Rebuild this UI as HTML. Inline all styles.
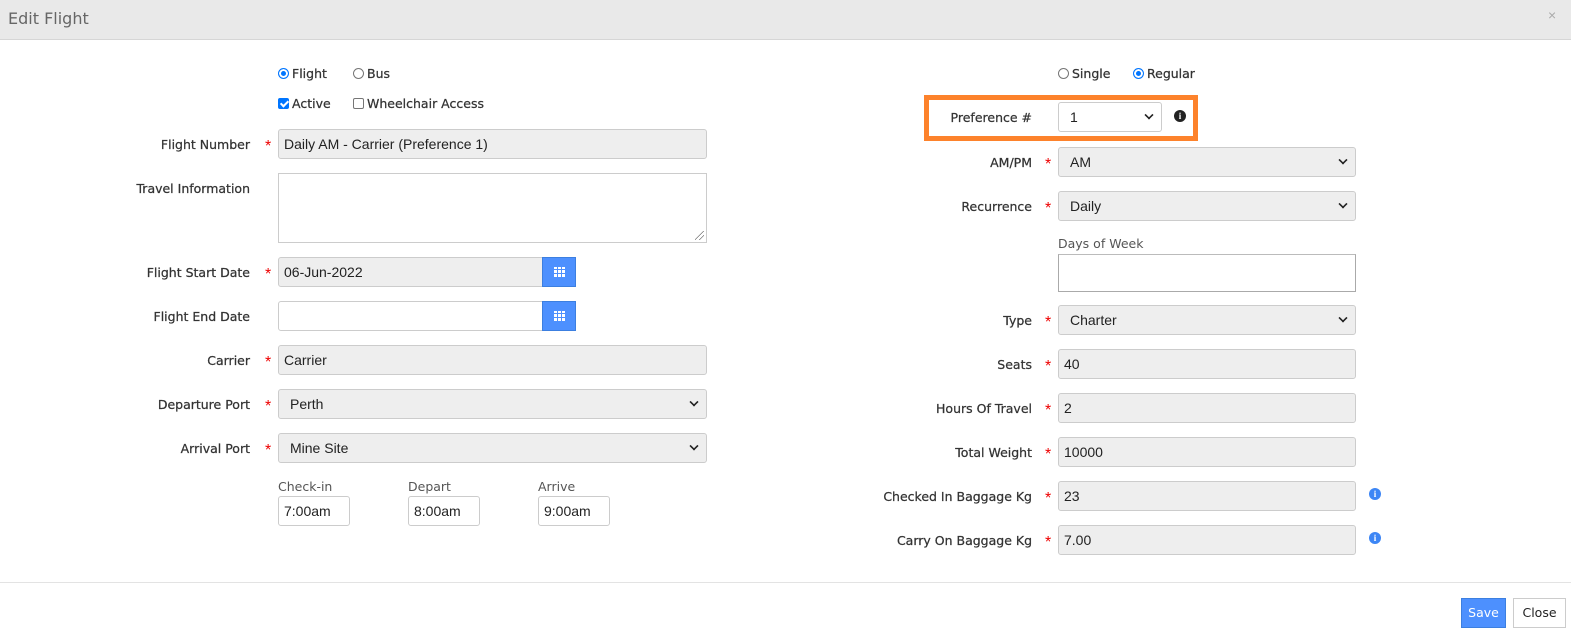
<!DOCTYPE html>
<html><head><meta charset="utf-8"><style>
*{box-sizing:border-box;margin:0;padding:0}
body{width:1571px;height:634px;background:#fff;position:relative;overflow:hidden;font-family:"DejaVu Sans","Liberation Sans",sans-serif}
.a{position:absolute}
.hdr{left:0;top:0;width:1571px;height:40px;background:#e9e9e9;border-bottom:1px solid #d6d6d6}
.title{left:8px;top:9px;font-size:16px;color:#666;font-family:"DejaVu Sans",sans-serif}
.lbl{font-size:12.5px;color:#333;text-align:right;font-weight:normal;-webkit-text-stroke:0.25px #333}
.star{color:#e00;font-size:16px;font-family:"Liberation Sans",sans-serif}
.in{background:#eee;border:1px solid #ccc;border-radius:3px;font-family:"Liberation Sans",sans-serif;font-size:14px;color:#222;padding-left:5px;line-height:28px;height:30px}
.w{background:#fff}
.chev{position:absolute;right:8px;width:8px;height:8px;border-right:2px solid #222;border-bottom:2px solid #222;transform:rotate(45deg) scale(.8);top:8px}
.cal{background:#4d90fe;border:1px solid #3c7fe0;width:34px;height:30px}
.cal i{position:absolute;left:11px;top:9px;width:11px;height:10px;background:
linear-gradient(90deg,transparent 3px,#4d90fe 3px,#4d90fe 4px,transparent 4px,transparent 7px,#4d90fe 7px,#4d90fe 8px,transparent 8px),
linear-gradient(transparent 2px,#4d90fe 2px,#4d90fe 3px,transparent 3px,transparent 6px,#4d90fe 6px,#4d90fe 7px,transparent 7px),#fff}
.opt{font-size:12.5px;color:#333;-webkit-text-stroke:0.25px #333}
.rad{width:11px;height:11px;border:1px solid #767676;border-radius:50%;background:#fff;display:inline-block;vertical-align:-1px;margin-right:3px}
.rad.on{border:1px solid #0075ff;box-shadow:inset 0 0 0 2px #fff;background:#0075ff}
.chk{width:11px;height:11px;border:1px solid #767676;border-radius:2px;background:#fff;display:inline-block;vertical-align:-1px;margin-right:3px;position:relative}
.chk.on{background:#0075ff;border-color:#0075ff}
.chk.on:after{content:"";position:absolute;left:3px;top:0px;width:3px;height:6px;border-right:2px solid #fff;border-bottom:2px solid #fff;transform:rotate(45deg)}
.info{width:12px;height:12px;border-radius:50%;color:#fff;font:bold 9px "Liberation Serif",serif;text-align:center;line-height:12px}
.sm{font-size:12.5px;color:#555}
</style></head><body>
<div class="a hdr"></div>
<div class="a title">Edit Flight</div>
<div class="a" style="left:1548px;top:7px;font-size:14px;color:#aaa;font-family:'Liberation Sans',sans-serif">×</div>

<div class="a opt" style="left:278px;top:66px"><span class="rad on"></span>Flight</div>
<div class="a opt" style="left:353px;top:66px"><span class="rad"></span>Bus</div>
<div class="a opt" style="left:278px;top:96px"><span class="chk on"></span>Active</div>
<div class="a opt" style="left:353px;top:96px"><span class="chk"></span>Wheelchair Access</div>

<div class="a lbl" style="left:0;width:250px;top:137px">Flight Number</div><div class="a star" style="left:265px;top:138px">*</div>
<div class="a in" style="left:278px;top:129px;width:429px">Daily AM - Carrier (Preference 1)</div>

<div class="a lbl" style="left:0;width:250px;top:181px">Travel Information</div>
<div class="a in w" style="left:278px;top:173px;width:429px;height:70px;border-radius:0"></div>
<div class="a" style="left:695px;top:231px;width:9px;height:9px;background:linear-gradient(135deg,transparent 45%,#777 45%,#777 52%,transparent 52%,transparent 70%,#777 70%,#777 77%,transparent 77%)"></div>

<div class="a lbl" style="left:0;width:250px;top:265px">Flight Start Date</div><div class="a star" style="left:265px;top:266px">*</div>
<div class="a in" style="left:278px;top:257px;width:265px;border-radius:3px 0 0 3px">06-Jun-2022</div>
<div class="a cal" style="left:542px;top:257px"><i></i></div>

<div class="a lbl" style="left:0;width:250px;top:309px">Flight End Date</div>
<div class="a in w" style="left:278px;top:301px;width:265px;border-radius:3px 0 0 3px"></div>
<div class="a cal" style="left:542px;top:301px"><i></i></div>

<div class="a lbl" style="left:0;width:250px;top:353px">Carrier</div><div class="a star" style="left:265px;top:354px">*</div>
<div class="a in" style="left:278px;top:345px;width:429px">Carrier</div>

<div class="a lbl" style="left:0;width:250px;top:397px">Departure Port</div><div class="a star" style="left:265px;top:398px">*</div>
<div class="a in" style="left:278px;top:389px;width:429px;padding-left:11px">Perth<span class="chev"></span></div>

<div class="a lbl" style="left:0;width:250px;top:441px">Arrival Port</div><div class="a star" style="left:265px;top:442px">*</div>
<div class="a in" style="left:278px;top:433px;width:429px;padding-left:11px">Mine Site<span class="chev"></span></div>

<div class="a sm" style="left:278px;top:479px">Check-in</div>
<div class="a sm" style="left:408px;top:479px">Depart</div>
<div class="a sm" style="left:538px;top:479px">Arrive</div>
<div class="a in w" style="left:278px;top:496px;width:72px">7:00am</div>
<div class="a in w" style="left:408px;top:496px;width:72px">8:00am</div>
<div class="a in w" style="left:538px;top:496px;width:72px">9:00am</div>

<!-- right -->
<div class="a opt" style="left:1058px;top:66px"><span class="rad"></span>Single</div>
<div class="a opt" style="left:1133px;top:66px"><span class="rad on"></span>Regular</div>

<div class="a" style="left:924px;top:95px;width:274px;height:46px;border:5px solid #fd822b"></div>
<div class="a lbl" style="left:900px;width:132px;top:110px">Preference #</div>
<div class="a in w" style="left:1058px;top:102px;width:104px;padding-left:11px">1<span class="chev"></span></div>
<div class="a info" style="left:1174px;top:110px;background:#222">i</div>

<div class="a lbl" style="left:800px;width:232px;top:155px">AM/PM</div><div class="a star" style="left:1045px;top:156px">*</div>
<div class="a in" style="left:1058px;top:147px;width:298px;padding-left:11px">AM<span class="chev"></span></div>

<div class="a lbl" style="left:800px;width:232px;top:199px">Recurrence</div><div class="a star" style="left:1045px;top:200px">*</div>
<div class="a in" style="left:1058px;top:191px;width:298px;padding-left:11px">Daily<span class="chev"></span></div>

<div class="a sm" style="left:1058px;top:236px">Days of Week</div>
<div class="a" style="left:1058px;top:254px;width:298px;height:38px;border:1px solid #aaa;border-top-color:#bbb"></div>

<div class="a lbl" style="left:800px;width:232px;top:313px">Type</div><div class="a star" style="left:1045px;top:314px">*</div>
<div class="a in" style="left:1058px;top:305px;width:298px;padding-left:11px">Charter<span class="chev"></span></div>

<div class="a lbl" style="left:800px;width:232px;top:357px">Seats</div><div class="a star" style="left:1045px;top:358px">*</div>
<div class="a in" style="left:1058px;top:349px;width:298px">40</div>

<div class="a lbl" style="left:800px;width:232px;top:401px">Hours Of Travel</div><div class="a star" style="left:1045px;top:402px">*</div>
<div class="a in" style="left:1058px;top:393px;width:298px">2</div>

<div class="a lbl" style="left:800px;width:232px;top:445px">Total Weight</div><div class="a star" style="left:1045px;top:446px">*</div>
<div class="a in" style="left:1058px;top:437px;width:298px">10000</div>

<div class="a lbl" style="left:800px;width:232px;top:489px">Checked In Baggage Kg</div><div class="a star" style="left:1045px;top:490px">*</div>
<div class="a in" style="left:1058px;top:481px;width:298px">23</div>
<div class="a info" style="left:1369px;top:488px;background:#3d86f5">i</div>

<div class="a lbl" style="left:800px;width:232px;top:533px">Carry On Baggage Kg</div><div class="a star" style="left:1045px;top:534px">*</div>
<div class="a in" style="left:1058px;top:525px;width:298px">7.00</div>
<div class="a info" style="left:1369px;top:532px;background:#3d86f5">i</div>

<div class="a" style="left:0;top:582px;width:1571px;height:1px;background:#e3e3e3"></div>
<div class="a" style="left:1461px;top:598px;width:45px;height:30px;background:#4d90fe;border:1px solid #3c7fe0;color:#fff;font-size:12.5px;text-align:center;line-height:28px">Save</div>
<div class="a" style="left:1513px;top:598px;width:53px;height:30px;background:#fff;border:1px solid #ccc;color:#222;font-size:12.5px;text-align:center;line-height:28px">Close</div>
</body></html>
